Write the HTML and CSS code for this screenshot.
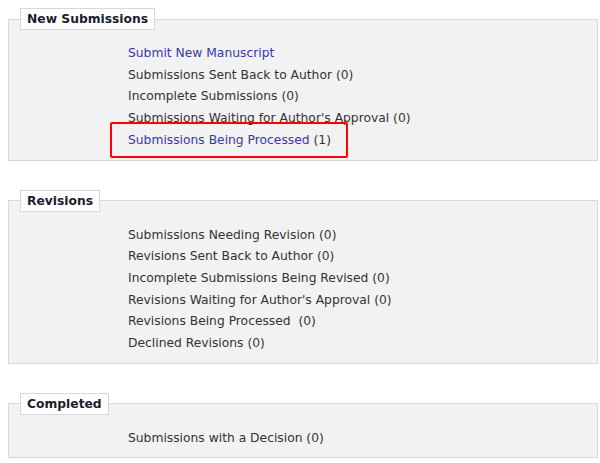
FILE: index.html
```html
<!DOCTYPE html>
<html lang="en">
<head>
    <meta charset="UTF-8">
    <meta name="viewport" content="width=device-width, initial-scale=1.0">
    <title>Author Main Menu</title>
    <link rel="stylesheet" href="styles.css">
</head>
<body>
    <div class="menu">
        <fieldset class="grupo">
            <legend>New Submissions</legend>
            <ul>
                <li><a href="#">Submit New Manuscript</a></li>
                <li>Submissions Sent Back to Author (0)</li>
                <li>Incomplete Submissions (0)</li>
                <li>Submissions Waiting for Author's Approval (0)</li>
                <li class="marcado"><a href="#">Submissions Being Processed</a> (1)</li>
            </ul>
        </fieldset>
        <fieldset class="grupo">
            <legend>Revisions</legend>
            <ul>
                <li>Submissions Needing Revision (0)</li>
                <li>Revisions Sent Back to Author (0)</li>
                <li>Incomplete Submissions Being Revised (0)</li>
                <li>Revisions Waiting for Author's Approval (0)</li>
                <li>Revisions Being Processed&nbsp; (0)</li>
                <li>Declined Revisions (0)</li>
            </ul>
        </fieldset>
        <fieldset class="grupo">
            <legend>Completed</legend>
            <ul>
                <li>Submissions with a Decision (0)</li>
            </ul>
        </fieldset>
    </div>
</body>
</html>
```

FILE: styles.css
```css
body {
    font-family: "DejaVu Sans", Verdana, sans-serif;
    font-size: 12.3px;
    color: #333;
    background-color: #fff;
    margin: 0;
    padding: 8px 2px 0 8px;
}
.grupo {
    margin: 0 0 29px 0;
    padding: 0 0 8px 0;
    border: 1px solid #d8d8d8;
    background-color: #f2f2f2;
}
.grupo legend {
    margin-left: 11px;
    padding: 4px 6px 3px 6px;
    line-height: 13px;
    background-color: #fff;
    border: 1px solid #d8d8d8;
    font-size: 12.3px;
    font-weight: bold;
    color: #1c1c2c;
}
.grupo ul {
    list-style: none;
    margin: 0;
    padding: 13px 0 0 119px;
}
.grupo li {
    line-height: 21.7px;
}
.grupo a {
    color: #3838a8;
    text-decoration: none;
}
.marcado {
    position: relative;
}
.marcado::after {
    content: "";
    position: absolute;
    left: -18px;
    top: -8px;
    width: 234px;
    height: 32px;
    border: 2px solid #f00;
    border-radius: 2px;
}
```
